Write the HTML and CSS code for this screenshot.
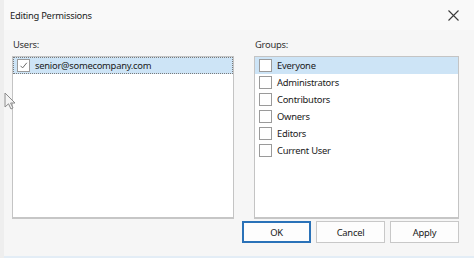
FILE: index.html
```html
<!DOCTYPE html>
<html>
<head>
<meta charset="utf-8">
<link rel="stylesheet" href="styles.css">
</head>
<body>
<div class="dialog">
  <div class="titlebar">
    <span class="title">Editing Permissions</span>
    <span class="close">
      <svg width="11" height="11" viewBox="0 0 11 11"><path d="M0.5 0.5 L10.5 10.5 M10.5 0.5 L0.5 10.5" stroke="#3a3a3a" stroke-width="1.1" fill="none"/></svg>
    </span>
  </div>
  <div class="content">
    <div class="panel users">
      <div class="label">Users:</div>
      <div class="listbox">
        <div class="row selected focused">
          <span class="check checked"><svg width="11" height="11" viewBox="0 0 11 11"><path d="M2.5 5.8 L4.6 7.9 L8.8 2.8" stroke="#6b6b6b" stroke-width="1" fill="none"/></svg></span>
          <span class="text">senior@somecompany.com</span>
        </div>
      </div>
    </div>
    <div class="panel groups">
      <div class="label">Groups:</div>
      <div class="listbox">
        <div class="row selected"><span class="check"></span><span class="text">Everyone</span></div>
        <div class="row"><span class="check"></span><span class="text">Administrators</span></div>
        <div class="row"><span class="check"></span><span class="text">Contributors</span></div>
        <div class="row"><span class="check"></span><span class="text">Owners</span></div>
        <div class="row"><span class="check"></span><span class="text">Editors</span></div>
        <div class="row"><span class="check"></span><span class="text">Current User</span></div>
      </div>
    </div>
  </div>
  <div class="buttons">
    <button class="btn default">OK</button>
    <button class="btn">Cancel</button>
    <button class="btn">Apply</button>
  </div>
  <div class="bottomline"></div>
  <svg class="cursor" width="14" height="20" viewBox="0 0 14 20"><path d="M1 1 L1 15 L4.5 11.8 L7 17 L9 16 L6.6 11 L11 11 Z" fill="#f4f4f4" stroke="#8a8a8a" stroke-width="1"/></svg>
</div>
</body>
</html>
```
FILE: styles.css
```css
* { box-sizing: border-box; }
html, body { margin: 0; padding: 0; }
body {
  width: 474px;
  height: 258px;
  overflow: hidden;
  background: #f5f5f5;
  font-family: "Noto Sans", "Open Sans", sans-serif;
  font-size: 9.4px;
  letter-spacing: -0.25px;
  color: #1a1a1a;
}
.dialog {
  position: relative;
  width: 474px;
  height: 258px;
  display: flex;
  flex-direction: column;
  background: #f6f6f6;
  border-left: 4px solid #eeeeee;
}
.titlebar {
  height: 30px;
  display: flex;
  align-items: center;
  justify-content: space-between;
  padding: 0 11px 0 6px;
  background: #f9f9f9;
}
.title { font-size: 9.4px; color: #222; }
.close { display: flex; padding-right: 4px; }
.content {
  display: flex;
  gap: 20px;
  padding: 8px 15px 0 8px;
}
.panel { display: flex; flex-direction: column; }
.users { width: 222px; }
.groups { width: 205px; }
.label { height: 18px; line-height: 14px; padding-left: 1px; color: #333; }
.listbox {
  height: 163px;
  background: #fff;
  border: 1px solid #c4c4c4;
  border-bottom: 2px solid #c6c6c6;
  padding: 0;
}
.row {
  height: 17px;
  display: flex;
  align-items: center;
  padding-left: 3px;
  border: 1px solid transparent;
}
.row.selected { background: #cde4f6; }
.row.focused { border: 1px dotted #7a7a7a; }
.check {
  width: 13px;
  height: 13px;
  background: #fff;
  border: 1px solid #9a9a9a;
  display: flex;
  align-items: center;
  justify-content: center;
  margin-right: 5px;
}
.text { color: #1a1a1a; line-height: 15px; }
.buttons {
  display: flex;
  justify-content: flex-end;
  gap: 5px;
  padding: 2px 15px 0 0;
}
.btn {
  width: 69px;
  height: 22px;
  font-family: inherit;
  font-size: 9.4px;
  letter-spacing: -0.25px;
  color: #1a1a1a;
  background: #fdfdfd;
  border: 1px solid #c8c8c8;
  padding: 0;
}
.btn.default { border: 2px solid #2a72b8; }
.bottomline {
  margin-top: auto;
  height: 2px;
  background: #e3edf6;
}
.cursor { position: absolute; left: 0px; top: 92px; }
```
